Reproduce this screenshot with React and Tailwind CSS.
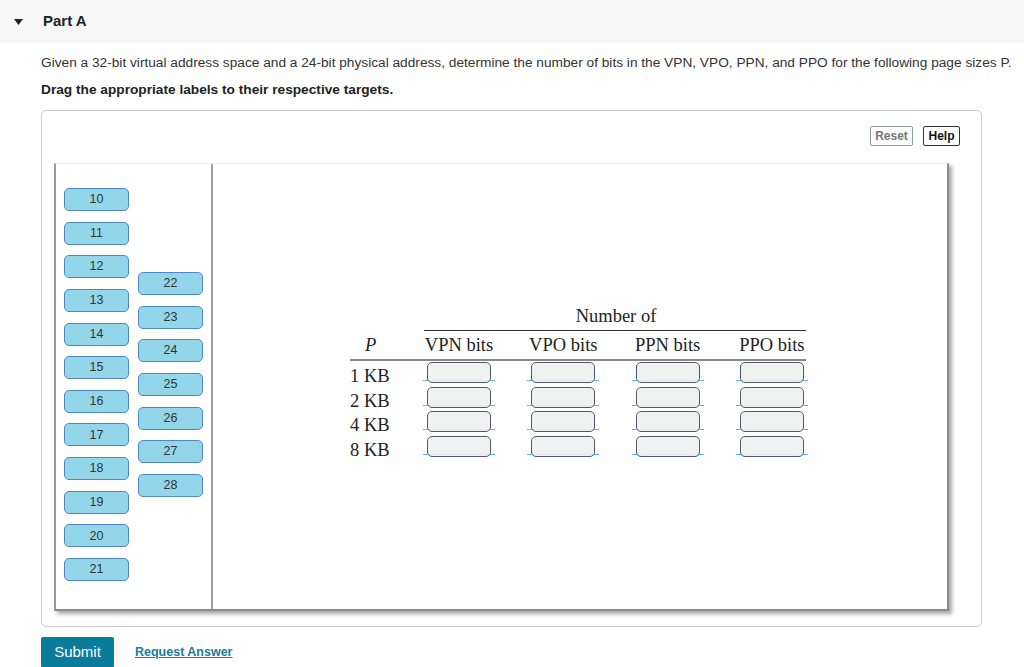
import React from 'react';

const leftLabels = ['10', '11', '12', '13', '14', '15', '16', '17', '18', '19', '20', '21'];
const rightLabels = ['22', '23', '24', '25', '26', '27', '28'];
const columns = ['VPN bits', 'VPO bits', 'PPN bits', 'PPO bits'];
const pageSizes = ['1 KB', '2 KB', '4 KB', '8 KB'];

const Label = ({ text }) => (
    <div className="flex h-[23px] w-[65px] items-center justify-center rounded-[5px] border border-[#4f86c6] bg-[#93d6ea] text-[12.5px] text-[#333]">
        {text}
    </div>
);

const DropTarget = () => (
    <div className="relative mt-[1px] h-[21px] w-[64px]">
        <div className="absolute -left-[4px] -right-[4px] bottom-[2px] h-[1px] bg-[#5cc3e6]" />
        <div className="relative h-full w-full rounded-[5px] border border-[#555766] bg-[#eef0f0]/90" />
    </div>
);

const App = () => {
    return (
        <div className="min-h-[667px] bg-white font-['Liberation_Sans',Arial,sans-serif] text-[#333]">
            {/* collapsible part header */}
            <div className="flex h-[43px] items-center bg-[#f7f7f7]">
                <svg className="ml-[14px] mt-[1px]" width="9" height="6" viewBox="0 0 9 6">
                    <polygon points="0,0 9,0 4.5,6" fill="#222" />
                </svg>
                <span className="ml-[20px] text-[15px] font-bold text-[#222]">Part A</span>
            </div>

            <div className="px-[41px]">
                <p className="mt-[11px] whitespace-nowrap text-[13.7px] leading-[18px]">
                    Given a 32-bit virtual address space and a 24-bit physical address, determine the number of bits in the VPN, VPO, PPN, and PPO for the following page sizes P.
                </p>
                <p className="mt-[9px] text-[13.7px] font-bold leading-[18px] text-[#222]">
                    Drag the appropriate labels to their respective targets.
                </p>

                {/* drag and drop widget */}
                <div className="mt-[11px] w-[941px] rounded-[5px] border border-[#cccccc] pb-[15px]">
                    <div className="flex justify-end gap-[10px] pr-[21px] pt-[15px]">
                        <button className="h-[20px] w-[43px] rounded-[2px] border border-[#8b9d9d] text-[12px] font-bold text-[#777]">
                            Reset
                        </button>
                        <button className="h-[20px] w-[37px] rounded-[2px] border border-[#333] text-[12px] font-bold text-[#111]">
                            Help
                        </button>
                    </div>

                    <div className="ml-[12px] mt-[17px] flex h-[448px] w-[895px] border-b-[2px] border-l-[2px] border-r-[2px] border-t border-b-[#8a8a8a] border-l-[#9a9a9a] border-r-[#8a8a8a] border-t-[#eeeeee] shadow-[3px_3px_4px_rgba(0,0,0,0.35)]">
                        {/* label palette */}
                        <div className="flex w-[157px] gap-[9px] border-r-[2px] border-r-[#a0a0a0] pl-[8px] pt-[24px]">
                            <div className="flex flex-col gap-[10.65px]">
                                {leftLabels.map((l) => (
                                    <Label key={l} text={l} />
                                ))}
                            </div>
                            <div className="mt-[84px] flex flex-col gap-[10.65px]">
                                {rightLabels.map((l) => (
                                    <Label key={l} text={l} />
                                ))}
                            </div>
                        </div>

                        {/* page size table */}
                        <div className="pl-[137px] pt-[140px] font-['Liberation_Serif','Times_New_Roman',serif] text-[18.5px] text-[#222]">
                            <div className="flex">
                                <div className="w-[74px]" />
                                <div className="w-[382px] border-b border-[#333]">
                                    <div className="flex h-[26px] items-center justify-center pl-[2px]">Number of</div>
                                </div>
                            </div>
                            <div className="flex h-[28px] items-center pt-[1px]">
                                <div className="w-[74px] pl-[15px] italic">P</div>
                                <div className="flex gap-[34.3px]">
                                    {columns.map((c) => (
                                        <div key={c} className="w-[70px] whitespace-nowrap text-center">
                                            {c}
                                        </div>
                                    ))}
                                </div>
                            </div>
                            <div className="h-[2px] w-[456px] bg-[#8a8a8a]" />
                            {pageSizes.map((size) => (
                                <div key={size} className="flex h-[24.67px] items-start">
                                    <div className="mt-[5px] w-[74px] leading-[21px]">{size}</div>
                                    <div className="flex gap-[34.3px]">
                                        {columns.map((c) => (
                                            <div key={c} className="flex w-[70px] justify-center">
                                                <DropTarget />
                                            </div>
                                        ))}
                                    </div>
                                </div>
                            ))}
                        </div>
                    </div>
                </div>

                <div className="mt-[10px] flex items-center">
                    <button className="h-[31px] w-[73px] rounded-[2px] bg-[#0b7b9c] text-[15px] text-white">
                        Submit
                    </button>
                    <a className="ml-[21px] text-[12.5px] font-bold text-[#1a7c9c] underline" href="#">
                        Request Answer
                    </a>
                </div>
            </div>
        </div>
    );
};

export default App;
